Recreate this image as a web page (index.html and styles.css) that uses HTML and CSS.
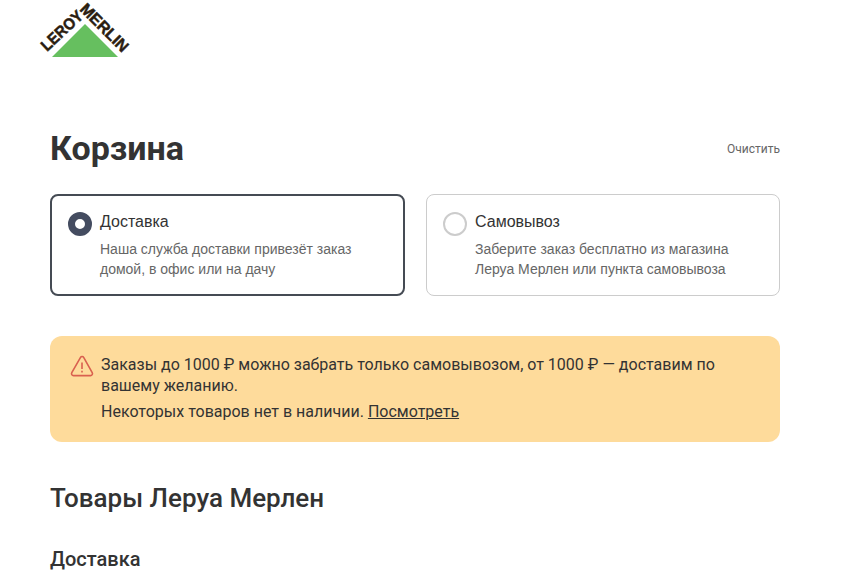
FILE: index.html
```html
<!DOCTYPE html>
<html lang="ru">
<head>
    <meta charset="UTF-8">
    <title>Корзина</title>
    <link rel="stylesheet" href="styles.css">
</head>
<body>
    <header class="logo-bar">
        <svg class="logo" width="96" height="60" viewBox="0 0 96 60">
            <polygon points="14,57 80,57 47,24" fill="#66bf5f"/>
            <text class="logo-text" transform="translate(9 52) rotate(-43)" textLength="51" lengthAdjust="spacingAndGlyphs">LEROY</text>
            <text class="logo-text" transform="translate(41 10) rotate(45)" textLength="61" lengthAdjust="spacingAndGlyphs">MERLIN</text>
        </svg>
    </header>

    <main class="content">
        <div class="title-row">
            <h1>Корзина</h1>
            <a class="clear-link">Очистить</a>
        </div>

        <div class="options">
            <div class="option selected">
                <span class="radio"></span>
                <div>
                    <div class="option-title">Доставка</div>
                    <p class="option-text">Наша служба доставки привезёт заказ<br>домой, в офис или на дачу</p>
                </div>
            </div>
            <div class="option">
                <span class="radio"></span>
                <div>
                    <div class="option-title">Самовывоз</div>
                    <p class="option-text">Заберите заказ бесплатно из магазина<br>Леруа Мерлен или пункта самовывоза</p>
                </div>
            </div>
        </div>

        <div class="alert">
            <svg class="alert-icon" width="24" height="22" viewBox="0 0 24 22" fill="none" stroke="#d9604f" stroke-width="1.6">
                <path d="M10.4 2.6 1.8 17.6c-.8 1.4.2 3 1.7 3h17c1.5 0 2.500-1.600 1.700-3L13.800 2.600c-.8-1.400-2.600-1.400-3.400 0z"/>
                <path d="M12 7.500v6.500M12 15.700v1.800"/>
            </svg>
            <div>
                <p class="alert-line">Заказы до 1000 ₽ можно забрать только самовывозом, от 1000 ₽ — доставим по вашему желанию.</p>
                <p class="alert-line second">Некоторых товаров нет в наличии. <a class="alert-link">Посмотреть</a></p>
            </div>
        </div>

        <h2>Товары Леруа Мерлен</h2>
        <h3>Доставка</h3>
    </main>
</body>
</html>
```

FILE: styles.css
```css
html, body {
    height: 577px;
    overflow: hidden;
}
body {
    font-family: Roboto, "Liberation Sans", sans-serif;
    background-color: #fff;
    color: #333;
    margin: 0;
    padding: 0;
}
.logo-bar {
    height: 108px;
    padding-left: 38px;
}
.logo {
    display: block;
}
.logo-text {
    font-family: "Liberation Sans", sans-serif;
    font-weight: 700;
    font-size: 16px;
    fill: #2a1c10;
    stroke: #2a1c10;
    stroke-width: 0.5;
}
.content {
    width: 730px;
    margin-left: 50px;
}
.title-row {
    display: flex;
    justify-content: space-between;
    align-items: center;
    height: 79px;
}
h1 {
    font-size: 34px;
    font-weight: 700;
    margin: 0;
}
.clear-link {
    font-size: 12px;
    color: #666;
    padding-top: 2px;
}
.options {
    display: grid;
    grid-template-columns: 355px 354px;
    gap: 21px;
    margin-top: 7px;
}
.option {
    display: flex;
    gap: 8px;
    height: 102px;
    box-sizing: border-box;
    padding: 16px 16px;
    border: 1px solid #ccc;
    border-radius: 8px;
}
.option.selected {
    border: 2px solid #454b54;
    padding: 15px 16px;
}
.radio {
    flex: none;
    width: 24px;
    height: 24px;
    margin-top: 1px;
    box-sizing: border-box;
    border: 2px solid #ccc;
    border-radius: 50%;
}
.selected .radio {
    border: 7px solid #444c60;
}
.option-title {
    font-family: "Liberation Sans", sans-serif;
    font-size: 16px;
    line-height: 22px;
}
.option-text {
    font-family: "Liberation Sans", sans-serif;
    font-size: 14px;
    line-height: 20px;
    color: #666;
    margin: 6px 0 0;
}
.alert {
    display: flex;
    gap: 7px;
    height: 106px;
    box-sizing: border-box;
    margin-top: 40px;
    padding: 18px 20px;
    background-color: #fedb9b;
    border-radius: 12px;
}
.alert-icon {
    flex: none;
    margin-top: 1px;
}
.alert-line {
    font-size: 16px;
    line-height: 21px;
    margin: 0;
}
.alert-line.second {
    margin-top: 5px;
}
.alert-link {
    text-decoration: underline;
}
h2 {
    font-size: 26px;
    font-weight: 500;
    line-height: 30px;
    margin: 41px 0 0;
}
h3 {
    font-size: 20px;
    font-weight: 500;
    line-height: 26px;
    margin: 33px 0 0;
}
```
